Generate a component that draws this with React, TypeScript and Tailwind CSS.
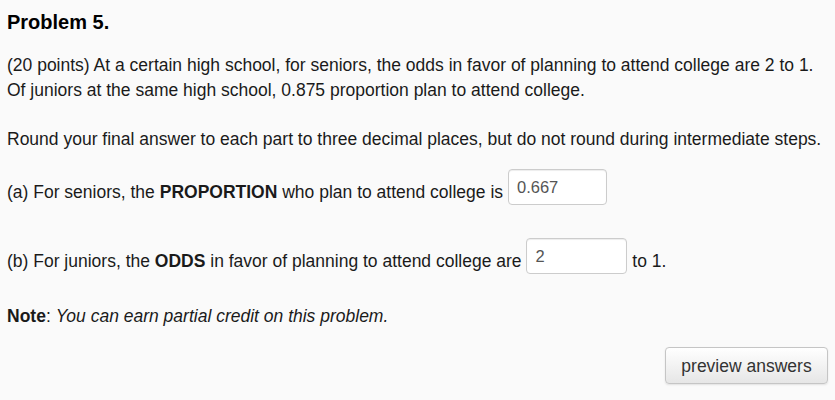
const sans = { fontFamily: '"Liberation Sans", Arial, sans-serif' }

// answer blank, baseline of the row sits 7px above its bottom edge
const AnswerBox = ({ value, width }: { value: string; width: string }) => (
  <span
    className={`inline-block ${width} h-[36px] overflow-hidden align-[-7px] rounded border border-[#cccccc] bg-white px-[8px] pt-[7px] text-[16.5px] leading-[20px] text-[#555555] shadow-[inset_0_1px_1px_rgba(0,0,0,0.075)]`}
  >
    {value}
  </span>
)

export default function App() {
  return (
    <div
      className="w-[835px] h-[400px] overflow-hidden bg-[#fafafa] px-[7px] text-[17.5px] leading-[25px] text-[#1a1a1a]"
      style={sans}
    >
      <h3 className="pt-[10px] text-[20px] font-bold leading-[24px] text-black">Problem 5.</h3>
      <p className="mt-[19px]">
        (20 points) At a certain high school, for seniors, the odds in favor of planning to attend college are 2 to 1.
        <br />
        Of juniors at the same high school, 0.875 proportion plan to attend college.
      </p>
      <p className="mt-[24px]">
        Round your final answer to each part to three decimal places, but do not round during intermediate steps.
      </p>
      <p className="mt-[17px]">
        (a) For seniors, the <b>PROPORTION</b> who plan to attend college is{' '}
        <AnswerBox value="0.667" width="w-[99px]" />
      </p>
      <p className="mt-[33px]">
        (b) For juniors, the <b>ODDS</b> in favor of planning to attend college are{' '}
        <AnswerBox value="2" width="w-[101px]" /> to 1.
      </p>
      <p className="mt-[30px]">
        <b>Note</b>: <i>You can earn partial credit on this problem.</i>
      </p>
      <div className="mt-[18px] flex justify-end">
        <button className="h-[37px] w-[163px] rounded border border-[#c5c5c5] bg-gradient-to-b from-white to-[#e6e6e6] text-[17.5px] leading-[20px] text-[#333333] shadow-[0_1px_2px_rgba(0,0,0,0.1)]">
          preview answers
        </button>
      </div>
    </div>
  )
}
